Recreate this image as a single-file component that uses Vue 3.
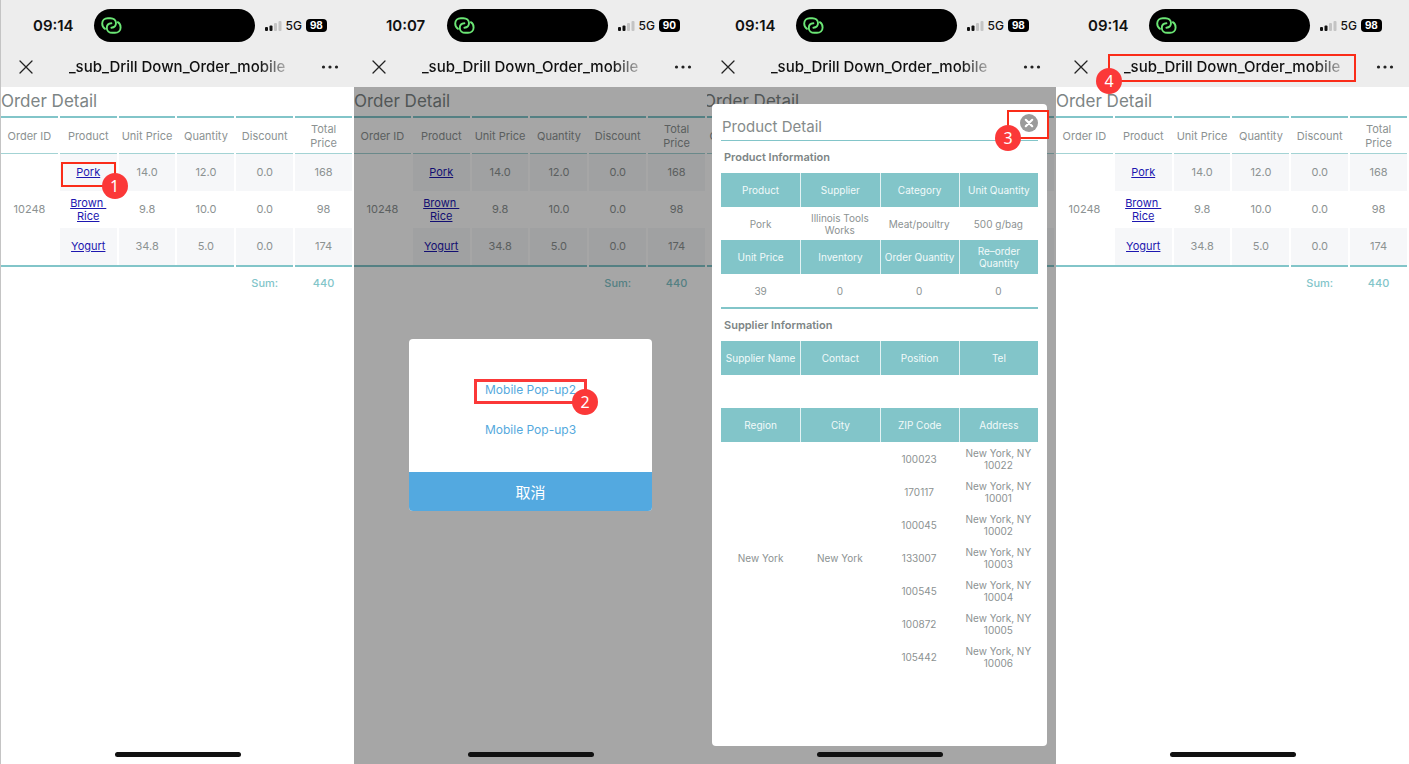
<template>
  <main class="board">
    <section v-for="(phone, i) in phones" :key="i" :class="['phone', 'phone-' + (i + 1)]">
      <header class="top">
        <div class="status">
          <span class="time">{{ phone.time }}</span>
          <div class="island">
            <svg width="21" height="17" viewBox="0 0 21 17" fill="none" stroke="#6be675" stroke-width="1.900" stroke-linecap="round">
              <path :d="ring" />
              <path :d="ring" transform="rotate(180 10.4 8.5)" />
            </svg>
          </div>
          <div class="signal">
            <svg width="17" height="10" viewBox="0 0 17 10">
              <rect x="0" y="6" width="3" height="4" rx="1" fill="#111" />
              <rect x="4.500" y="4.500" width="3" height="5.500" rx="1" fill="#111" />
              <rect x="9" y="2" width="3" height="8" rx="1" fill="#c4c4c4" />
              <rect x="13.500" y="0" width="3" height="10" rx="1" fill="#c4c4c4" />
            </svg>
            <span class="net">5G</span>
            <span class="battery">{{ phone.battery }}</span>
          </div>
        </div>
        <div class="nav">
          <button class="nav-btn" type="button" aria-label="Close">
            <svg width="14" height="14" viewBox="0 0 14 14" stroke="#222" stroke-width="1.300" stroke-linecap="round">
              <path d="M1 1l12 12M13 1L1 13" />
            </svg>
          </button>
          <h1 class="nav-title">_sub_Drill Down_Order_mobile</h1>
          <button class="nav-btn" type="button" aria-label="More">
            <svg width="18" height="4" viewBox="0 0 18 4" fill="#222">
              <circle cx="2.500" cy="2" r="1.600" /><circle cx="9" cy="2" r="1.600" /><circle cx="15.500" cy="2" r="1.600" />
            </svg>
          </button>
          <span v-if="phone.mark === 4" class="mark mark-nav"><b class="badge badge-left">4</b></span>
        </div>
      </header>

      <div class="content">
        <h2 class="page-title">Order Detail</h2>
        <table class="orders">
          <thead>
            <tr><th v-for="h in orderHeads" :key="h">{{ h }}</th></tr>
          </thead>
          <tbody>
            <tr v-for="(row, r) in orders" :key="row.product">
              <td v-if="r === 0" class="order-id" :rowspan="orders.length">10248</td>
              <td class="product">
                <a href="#" @click.prevent>{{ row.product }}</a>
                <span v-if="phone.mark === 1 && r === 0" class="mark mark-cell"><b class="badge">1</b></span>
              </td>
              <td v-for="(v, c) in row.values" :key="c">{{ v }}</td>
            </tr>
          </tbody>
          <tfoot>
            <tr>
              <td colspan="4"></td>
              <td>Sum:</td>
              <td>440</td>
            </tr>
          </tfoot>
        </table>

        <div v-if="phone.modal" class="overlay"></div>
      </div>

      <div v-if="phone.modal === 'menu'" class="menu">
        <div class="menu-list">
          <button type="button" class="menu-item">Mobile Pop-up2<span class="mark mark-menu"><b class="badge">2</b></span></button>
          <button type="button" class="menu-item">Mobile Pop-up3</button>
        </div>
        <button type="button" class="menu-cancel">取消</button>
      </div>

      <div v-if="phone.modal === 'detail'" class="detail">
        <h2 class="detail-title">Product Detail</h2>
        <button type="button" class="detail-close" aria-label="Close">
          <svg width="18" height="18" viewBox="0 0 18 18">
            <circle cx="9" cy="9" r="9" fill="#9b9b9b" />
            <path d="M5.800 5.800l6.400 6.400M12.200 5.800l-6.400 6.400" stroke="#fff" stroke-width="2.200" stroke-linecap="round" />
          </svg>
        </button>
        <span class="mark mark-close"><b class="badge badge-left">3</b></span>

        <h3 class="detail-sub">Product Information</h3>
        <table class="info info-product">
          <tbody>
            <template v-for="(group, g) in productInfo" :key="g">
              <tr><th v-for="h in group.heads" :key="h">{{ h }}</th></tr>
              <tr><td v-for="(v, c) in group.values" :key="c">{{ v }}</td></tr>
            </template>
          </tbody>
        </table>

        <h3 class="detail-sub">Supplier Information</h3>
        <table class="info">
          <tbody>
            <tr><th v-for="h in ['Supplier Name', 'Contact', 'Position', 'Tel']" :key="h">{{ h }}</th></tr>
            <tr><td colspan="4"></td></tr>
            <tr><th v-for="h in ['Region', 'City', 'ZIP Code', 'Address']" :key="h">{{ h }}</th></tr>
            <tr v-for="(a, r) in addresses" :key="a.zip">
              <td v-if="r === 0" :rowspan="addresses.length">New York</td>
              <td v-if="r === 0" :rowspan="addresses.length">New York</td>
              <td>{{ a.zip }}</td>
              <td>New York, NY {{ a.code }}</td>
            </tr>
          </tbody>
        </table>
      </div>

      <div class="home-bar"></div>
    </section>
  </main>
</template>

<script setup>
const phones = [
  { time: '09:14', battery: 98, mark: 1 },
  { time: '10:07', battery: 90, modal: 'menu' },
  { time: '09:14', battery: 98, modal: 'detail' },
  { time: '09:14', battery: 98, mark: 4 }
]

// one half of the linked-rings icon, the other half is the same path turned round
const ring = 'M4 11.800C2.200 10.800 1.200 8.900 1.200 6.600C1.200 3.400 3.600 1.200 6.800 1.200h2.600c3.200 0 5.600 2 5.600 4.900 0 2.600-1.800 4.500-4.600 4.600'

const orderHeads = ['Order ID', 'Product', 'Unit Price', 'Quantity', 'Discount', 'Total Price']

const orders = [
  { product: 'Pork', values: ['14.0', '12.0', '0.0', '168'] },
  { product: 'Brown\u00a0 Rice', values: ['9.8', '10.0', '0.0', '98'] },
  { product: 'Yogurt', values: ['34.8', '5.0', '0.0', '174'] }
]

const productInfo = [
  {
    heads: ['Product', 'Supplier', 'Category', 'Unit Quantity'],
    values: ['Pork', 'Illinois Tools Works', 'Meat/poultry', '500 g/bag']
  },
  {
    heads: ['Unit Price', 'Inventory', 'Order Quantity', 'Re–order Quantity'],
    values: ['39', '0', '0', '0']
  }
]

const addresses = [
  { zip: '100023', code: '10022' },
  { zip: '170117', code: '10001' },
  { zip: '100045', code: '10002' },
  { zip: '133007', code: '10003' },
  { zip: '100545', code: '10004' },
  { zip: '100872', code: '10005' },
  { zip: '105442', code: '10006' }
]
</script>

<style>
body { margin: 0; background: #fff; }
</style>

<style scoped>
* { box-sizing: border-box; }
h1, h2, h3 { margin: 0; font-weight: 400; }
button { padding: 0; border: none; background: none; font: inherit; color: inherit; cursor: pointer; }
svg { display: block; }

.board { display: grid; grid-template-columns: 354fr 353fr 349fr 353fr; min-height: 100vh; font-family: Inter, "Noto Sans CJK SC", sans-serif; }
.phone { position: relative; display: flex; flex-direction: column; min-width: 0; background: #fff; overflow: hidden; }
.phone-1 { border-left: 1px solid #c4c4c4; }
.phone-2 { z-index: 1; }
.phone-3 { margin-left: -4px; }

.top { height: 87px; background: #ededed; color: #111; }
.status { display: grid; grid-template-columns: 1fr 161px 1fr; align-items: center; padding: 9px 7px 0 0; }
.time { padding-left: 32px; font-size: 15px; line-height: 20px; font-weight: 600; }
.island { display: flex; align-items: center; height: 33px; padding-left: 7px; border-radius: 17px; background: #000; }
.signal { display: flex; align-items: center; gap: 4px; padding-left: 10px; }
.net { font-size: 12px; line-height: 16px; font-weight: 500; }
.battery { width: 21px; border-radius: 4px; background: #000; color: #fff; font-size: 10px; line-height: 13px; font-weight: 700; text-align: center; }
.nav { position: relative; display: flex; align-items: center; justify-content: space-between; height: 28px; margin-top: 11px; padding: 0 15px 0 18px; }
.nav-title { background: linear-gradient(90deg, #111 88%, #aaa); background-clip: text; color: transparent; font-size: 15px; line-height: 20px; font-weight: 500; white-space: nowrap; }

.content { position: relative; flex: 1; }
.page-title { padding-top: 2px; color: #7d8585; font-size: 17px; line-height: 24px; }
.orders { width: calc(100% + 2px); margin: 3px 0 0 -2px; table-layout: fixed; border-collapse: separate; border-spacing: 2px 0; color: #8c9292; font-size: 11px; line-height: 13px; text-align: center; }
.orders th { height: 38px; padding: 0 2px; border-top: 2px solid #82c5c9; border-bottom: 1px solid #a3d3d4; font-weight: 400; line-height: 14px; }
.orders td { height: 37px; padding: 0 8px; }
.orders tbody tr:nth-child(odd) td:not(.order-id) { background: #f6f7f9; }
.orders tfoot td { height: 35px; border-top: 2px solid #82c5c9; color: #82c5c9; font-weight: 500; }
.orders .product { position: relative; }
.product a { color: #1d17b0; }

.overlay { position: absolute; inset: 0; background: rgba(0, 0, 0, 0.35); }

.menu { position: absolute; top: 339px; left: 55px; right: 55px; border-radius: 4px; background: #fff; color: #55a9dd; }
.menu-list { display: flex; flex-direction: column; align-items: center; gap: 20px; height: 133px; padding-top: 41px; }
.menu-item { position: relative; font-size: 12px; line-height: 20px; }
.menu-cancel { width: 100%; height: 39px; border-radius: 0 0 4px 4px; background: #53a9e0; color: #fff; font-size: 15px; }

.detail { position: absolute; top: 104px; left: 9px; right: 9px; bottom: 18px; padding: 9px; border-radius: 4px; background: #fff; }
.detail-title { padding: 2px 1px; border-bottom: 1px solid #82c5c9; color: #858b8b; font-size: 15px; line-height: 23px; }
.detail-close { position: absolute; top: 10px; right: 9px; }
.detail-sub { padding: 8px 3px; color: #7d8585; font-size: 11px; line-height: 16px; font-weight: 600; }
.info { width: 100%; table-layout: fixed; border-collapse: separate; border-spacing: 0; color: #8c9292; font-size: 10px; line-height: 12px; text-align: center; }
.info th { height: 34px; padding: 0; border-left: 1px solid #e4f3f4; background: #82c5c9; color: #f2fafa; font-weight: 400; }
.info th:first-child { border-left: none; }
.info td { height: 33px; padding: 0 4px; }
.info-product { border-bottom: 2px solid #82c5c9; }

/* numbered callouts */
.mark { position: absolute; z-index: 2; border: 2px solid #fa2c19; }
.mark-cell { inset: 8px 1px 4px 1px; }
.mark-menu { inset: -1px -11px -4px; border: 3px solid #fb3838; }
.mark-nav { top: 1px; bottom: -1px; left: 52px; right: 53px; }
.mark-close { top: 6px; right: -2px; width: 42px; height: 29px; }
.badge { position: absolute; right: -14px; bottom: -14px; width: 26px; height: 26px; border-radius: 50%; background: #fb3838; color: #fff; font-family: "Noto Sans", sans-serif; font-size: 16px; line-height: 26px; font-weight: 400; text-align: center; }
.badge-left { right: auto; left: -14px; }

.home-bar { position: absolute; bottom: 7px; left: 50%; width: 126px; height: 5px; margin-left: -63px; border-radius: 3px; background: #111; }
</style>
